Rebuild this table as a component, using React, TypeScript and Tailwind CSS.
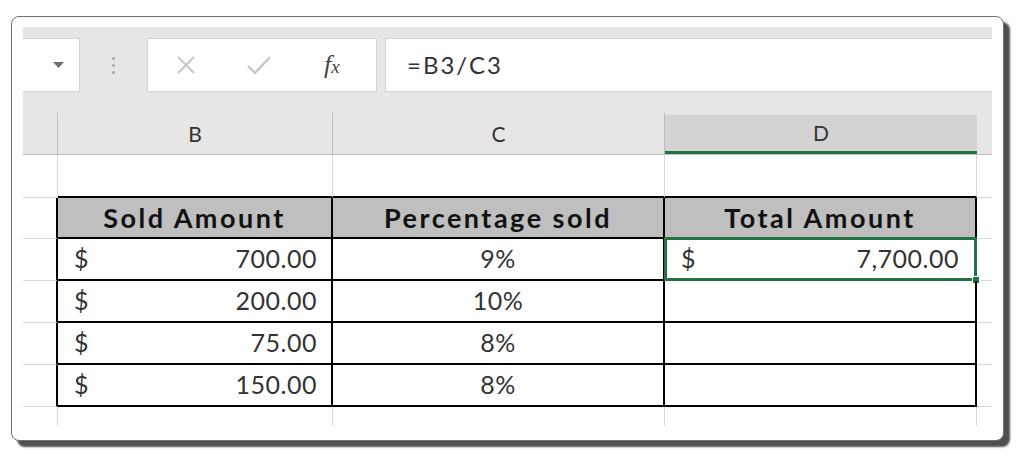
import React from "react";

const font = { fontFamily: "Lato, 'Open Sans', 'Liberation Sans', sans-serif" };

export default function App() {
  const cols = "grid-cols-[35px_275px_332px_312px_15px]";
  const light = "border-[#d9d9d9]";
  const rows = [
    { a: "700.00", p: "9%", t: "7,700.00" },
    { a: "200.00", p: "10%", t: "" },
    { a: "75.00", p: "8%", t: "" },
    { a: "150.00", p: "8%", t: "" },
  ];
  const head = "bg-[#bfbfbf] border-r-2 border-b-2 border-black flex items-center justify-center text-[27px] font-bold text-[#111] tracking-[2.5px] leading-none";
  return (
    <div className="w-[1024px] h-[463px] bg-white pt-[16px] pl-[11px]" style={font}>
      <div className="w-[993px] h-[425px] border-[1.5px] border-[#707070] rounded-[8px] bg-white shadow-[6px_6px_2px_rgba(60,60,60,0.9)] pt-[10px] pl-[11px] overflow-hidden">
        <div className="w-[969px]">
          <div className="bg-[#e6e6e6] h-[128px] flex flex-col">
            <div className="h-[11px]" />
            <div className="flex h-[54px] items-stretch">
              <div className="w-[57px] bg-white border-y border-r border-[#d4d4d4] flex items-center justify-end pr-[15px]">
                <svg width="11" height="6" viewBox="0 0 11 6">
                  <path d="M0 0 L11 0 L5.5 6 Z" fill="#6f6f6f" />
                </svg>
              </div>
              <div className="w-[67px] flex flex-col items-center justify-center gap-[4px]">
                <div className="w-[3px] h-[3px] rounded-full bg-[#a8a8a8]" />
                <div className="w-[3px] h-[3px] rounded-full bg-[#a8a8a8]" />
                <div className="w-[3px] h-[3px] rounded-full bg-[#a8a8a8]" />
              </div>
              <div className="w-[230px] bg-white border border-[#d4d4d4] flex items-center">
                <svg width="22" height="22" viewBox="0 0 22 22" className="ml-[27px]">
                  <path d="M3 3 L19 19 M19 3 L3 19" stroke="#c4c4c4" strokeWidth="1.8" />
                </svg>
                <svg width="26" height="22" viewBox="0 0 26 22" className="ml-[49px]">
                  <path d="M2 12 L9 19 L24 3" stroke="#c4c4c4" strokeWidth="2.4" fill="none" />
                </svg>
                <span className="ml-[52px] text-[26px] text-[#444] italic leading-none" style={{ fontFamily: "'Liberation Serif', 'DejaVu Serif', serif" }}>
                  f<span className="text-[19px]">x</span>
                </span>
              </div>
              <div className="w-[8px]" />
              <div className="flex-1 bg-white border-y border-l border-[#d4d4d4] flex items-center pl-[21px] text-[24px] tracking-[2px] text-[#333]">
                =B3/C3
              </div>
            </div>
            <div className="h-[21px]" />
            <div className={`grid ${cols} h-[42px] border-b border-[#bdbdbd]`}>
              <div className="border-r border-[#bdbdbd]" />
              <div className="border-r border-[#bdbdbd] flex items-center justify-center text-[21px] text-[#333]">B</div>
              <div className="border-r border-[#bdbdbd] flex items-center justify-center text-[21px] text-[#333]">C</div>
              <div className="bg-[#d3d3d3] mt-[2px] border-b-[3px] border-[#217346] flex items-center justify-center text-[21px] text-[#333]">D</div>
              <div />
            </div>
          </div>
          <div className={`grid ${cols}`}>
            <div className={`h-[43px] border-r border-b ${light}`} />
            <div className={`border-r ${light} border-b-2 border-b-black`} />
            <div className={`border-r ${light} border-b-2 border-b-black`} />
            <div className={`border-r ${light} border-b-2 border-b-black`} />
            <div className={`border-b ${light}`} />
            <div className={`h-[41px] border-b ${light} border-r-2 border-r-black`} />
            <div className={head}>Sold Amount</div>
            <div className={head}>Percentage sold</div>
            <div className={head}>Total Amount</div>
            <div className={`border-b ${light}`} />
            {rows.map((r, i) => (
              <React.Fragment key={i}>
                <div className={`h-[42px] border-b ${light} border-r-2 border-r-black`} />
                <div className="border-r-2 border-b-2 border-black flex items-center justify-between pl-[16px] pr-[14px] text-[25px] tracking-[0.5px] text-[#333]">
                  <span>$</span>
                  <span>{r.a}</span>
                </div>
                <div className="border-r-2 border-b-2 border-black flex items-center justify-center text-[25px] tracking-[0.5px] text-[#333]">{r.p}</div>
                <div className="relative border-r-2 border-b-2 border-black flex items-center justify-between pl-[16px] pr-[16px] text-[25px] tracking-[0.5px] text-[#333]">
                  {r.t ? (
                    <>
                      <span>$</span>
                      <span>{r.t}</span>
                      <div className="absolute -left-[1px] -top-[2px] -right-[2px] -bottom-[2px] border-[3px] border-[#217346]" />
                      <div className="absolute -right-[5px] -bottom-[5px] w-[8px] h-[8px] bg-[#217346] border border-white" />
                    </>
                  ) : null}
                </div>
                <div className={`border-b ${light}`} />
              </React.Fragment>
            ))}
            <div className={`h-[19px] border-r ${light}`} />
            <div className={`border-r ${light}`} />
            <div className={`border-r ${light}`} />
            <div className={`border-r ${light}`} />
            <div />
          </div>
        </div>
      </div>
    </div>
  );
}
